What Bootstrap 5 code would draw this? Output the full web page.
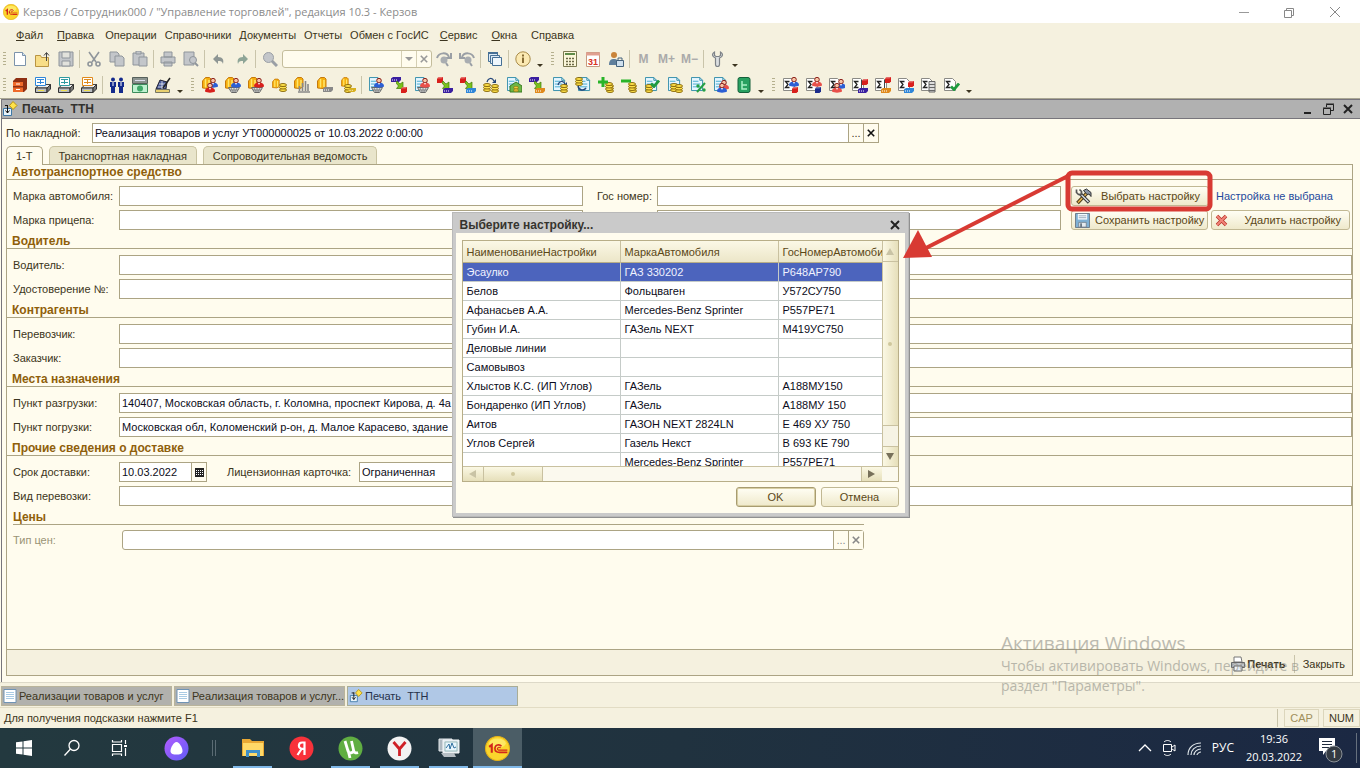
<!DOCTYPE html>
<html lang="ru">
<head>
<meta charset="utf-8">
<meta name="viewport" content="width=device-width, initial-scale=1">
<title>Печать ТТН</title>
<link href="https://cdn.jsdelivr.net/npm/bootstrap@5.3.0/dist/css/bootstrap.min.css" rel="stylesheet">
<style>
  :root { --line:#aca484; --bar:#f5f1df; --paper:#fffcee; --ink:#3c3520; --gold:#8f5f0b; }
  body { font:11px/14px "Liberation Sans", Arial, sans-serif; color:var(--ink); background:var(--bar); overflow:hidden; }
  button { font:inherit; color:inherit; background:none; border:0; padding:0; }
  input { font:inherit; color:#0c0c20; border:0; background:transparent; padding:0 2px; min-width:0; outline:0; }
  a { text-decoration:none; }
  svg { display:block; flex:none; }
  .seg { font-family:"Open Sans", "Noto Sans", sans-serif; }

  .app-title { height:23px; background:#fff; color:#8b8b8b; padding-left:3px; }
  .app-title .ctl { width:46px; height:23px; }
  .app-title .ctls { margin-right:1px; }
  .menu-row { height:23px; padding:0 9px; }
  .menu-row a { color:var(--ink); padding:0 4px; white-space:nowrap; }
  .menu-row a.hot { padding:0 7px; }
  .tool-row { height:26px; }
  .tool { width:23px; height:22px; display:flex; align-items:center; justify-content:center; flex:none; font-weight:bold; font-size:12px; color:#aaa; }
  .grip { width:12px; height:15px; background:repeating-linear-gradient(#b5b08e 0 1px, transparent 1px 3px) 5px 0/3px 100% no-repeat; flex:none; }
  .grip.lead-in { width:8px; background-position:3px 0; }
  .vsep { width:5px; height:18px; background:linear-gradient(#c9c4aa,#c9c4aa) 2px 0/1px 100% no-repeat; flex:none; }
  .more { width:12px; height:16px; display:flex; align-items:flex-end; justify-content:center; flex:none; }
  .finder { width:150px; height:18px; border:1px solid #c4bd9c; border-radius:3px; background:var(--paper); margin-left:1px; }
  .finder input { width:118px; }
  .finder button { width:15px; border-left:1px solid #d5cfb4; display:flex; align-items:center; justify-content:center; flex:none; }

  .mdi { border-top:1px solid #a9a693; background:var(--paper); border-bottom:1px solid #ddd9c8; }
  .mdi-frame { border-left:1px solid #77757c; border-top:1px solid #77757c; margin-left:1px; }
  .mdi-title { height:19px; background:#b1b1b1; border-bottom:1px solid #77757c; font-weight:bold; font-size:12px; color:#33322e; padding-right:2px; }
  .mdi-title .ctl { width:20px; height:18px; display:flex; align-items:center; justify-content:center; }
  .content { padding:4px 7px 6px 4px; }
  .box { border:1px solid var(--line); background:#fff; height:20px; display:flex; min-width:0; }
  .box input { flex:1 1 0; height:18px; }
  .box button { width:15px; border-left:1px solid var(--line); display:flex; align-items:center; justify-content:center; flex:none; background:var(--paper); }
  .basis-label { width:86px; }
  .basis { width:787px; }
  .tabs { gap:6px; margin-top:3px; }
  .tabs button { height:18px; padding:0 9px; border:1px solid #c8c2a0; border-bottom:0; border-radius:5px 5px 0 0; background:#e9e5cb; }
  .tabs button.on { background:var(--paper); height:19px; margin-bottom:-1px; position:relative; border-color:var(--line); }
  .panel { border:1px solid var(--line); }
  .sect { height:19px; padding:0 5px; border-bottom:1px solid var(--line); font-size:12px; font-weight:bold; line-height:14px; color:var(--gold); margin:0 0 6px; display:flex; align-items:flex-end; }
  .sect.first { height:15px; }
  .form-line { display:grid; grid-template-columns:106px 1fr; align-items:center; padding-left:6px; margin-bottom:4px; }
  .group > .form-line:last-child { margin-bottom:0; }
  .cars { grid-template-columns:106px 464fr 74px 404fr 291px; }
  .cars > label + .box + label { padding-left:14px; }
  .set-buttons { padding:0 2px 0 10px; gap:3px; }
  .set-buttons a { color:#1f4a9c; padding-left:4px; white-space:nowrap; }
  .push { height:20px; border:1px solid #c1b893; border-radius:3px; background:linear-gradient(#fffef4,#efe9cb); color:#5b4716; }
  .push svg { margin:0 5px 0 3px; }
  .pick { width:138px; }
  .save { width:137px; }
  .delivery { grid-template-columns:106px 88px 152px 240px; }
  .delivery > label + .box + label { padding-left:20px; }
  .prices { width:851px; margin-left:6px; }
  .prices .sect { padding-left:0; margin-bottom:5px; }
  .prices .form-line { grid-template-columns:109px 1fr; padding:0; color:#9a9375; }
  .prices .box { border-radius:3px; }
  .prices .box button { color:#888; }
  .foot { height:26px; border-top:1px solid var(--line); background:var(--bar); padding:2px 7px 0 0; gap:6px; }

  .win-tabs { height:24px; padding:1px 1px 0; gap:2px; }
  .win-tabs button { width:171px; height:20px; border:1px solid #b9b49b; background:#b1b1ad; padding:0 1px; gap:2px; white-space:nowrap; }
  .win-tabs button.on { background:#b0c8e6; border-color:#a9ad96; color:#26314a; }
  .status { height:21px; border-top:1px solid #e2dcc4; padding-left:4px; }
  .status .cell { height:18px; border:1px solid #dcd6bc; padding:0 5px; display:flex; align-items:center; }
  .status .off { color:#a08f5a; }

  .taskbar { height:40px; background:linear-gradient(90deg,#23393f,#20323f 50%,#1b2843); color:#fff; }
  .taskbar .slot { width:49px; height:40px; display:flex; align-items:center; justify-content:center; border-bottom:2px solid transparent; flex:none; padding-top:2px; }
  .taskbar .sys { width:48px; }
  .taskbar .run { background:linear-gradient(#80b8e8,#80b8e8) center bottom/39px 2px no-repeat border-box; }
  .taskbar .now { background:#4b5d66; border-color:#80b8e8; }
  .lang { font-size:12px; }
  .clock { line-height:18px; width:64px; }

  .dialog-layer { position:absolute; left:0; right:0; top:213px; pointer-events:none; }
  .dlg { width:455px; border:3px solid #cacaca; border-width:0 3px 3px; background:var(--paper); box-shadow:0 0 0 1px #b9b9b9, 1px 1px 0 1px #909090; pointer-events:auto; }
  .dlg-title { height:20px; background:#cacaca; font-size:12px; font-weight:bold; color:#36342f; padding:3px 5px 0 4px; }
  .dlg-body { padding:7px 6px 6px; }
  .lister { border:1px solid #b8ae88; display:grid; grid-template-columns:minmax(0,1fr) 16px; }
  .clip { height:225px; overflow:hidden; background:#fff; }
  .lister table { table-layout:fixed; width:480px; color:#0c0c20; border-collapse:separate; border-spacing:0; }
  .lister .c1, .lister .c2 { width:158px; }
  .lister th { font-weight:normal; height:22px; background:linear-gradient(#fbf8e6,#ece6c8); color:#5b4716; border-right:1px solid #c9c1a0; border-bottom:1px solid #b8ae88; padding:0 4px; }
  .lister td { height:19px; padding:0 4px; border-right:1px solid #c5cbc8; border-bottom:1px solid #c5cbc8; white-space:nowrap; }
  .lister tr.sel td { background:#4c64bd; color:#f0f2ff; }
  .vbar { border-left:1px solid #c9c1a0; background:#f6f3e4; }
  .knob { background:linear-gradient(90deg,#fbf8e4,#e6dfba); border-bottom:1px solid #c9c1a0; display:flex; align-items:center; justify-content:center; color:#77705a; }
  .knob.off { color:#c9c3a5; }
  .vbar .up { height:21px; } .vbar .track { height:164px; } .vbar .down { height:20px; border:0; border-top:1px solid #c9c1a0; }
  .hbar { height:15px; border-top:1px solid #c9c1a0; background:#fbf9ee; }
  .hbar .knob { border:0; border-right:1px solid #c9c1a0; background:linear-gradient(#fbf8e4,#e6dfba); width:21px; }
  .hbar .track { width:59px; }
  .hbar .next { border-left:1px solid #c9c1a0; border-right:0; }
  .answers { gap:5px; padding-top:5px; }
  .dlg .push { width:78px; height:20px; }
  .dlg .push.main { width:80px; border-color:#a89c70; box-shadow:inset 0 0 0 1px #d8cfa4; }

  .pointer { position:absolute; right:146px; top:168px; pointer-events:none; z-index:3; }
  .wmark { position:absolute; right:0; bottom:72px; width:359px; color:#8f8f87; opacity:.6; font-size:14px; line-height:20px; pointer-events:none; padding-right:52px; }
  .wmark b { font-weight:normal; font-size:19px; line-height:26px; display:block; }
</style>
</head>
<body>
<svg width="0" height="0" class="position-absolute" aria-hidden="true">
  <defs>
    <symbol id="paper" viewBox="0 0 14 16"><path d="M.5.5h9l3 3v11H.5z" fill="#e6f6ff" stroke="#2f8aa8"/><path d="M9.500.5v3h3" fill="none" stroke="#2f8aa8"/><path d="M2 4.500h6M2 7.500h8M2 10.500h8" stroke="#3fa8cc"/></symbol>
    <symbol id="sig" viewBox="0 0 16 16"><path d="M.5 1.500h8l3 3v9H.5z" fill="#fff" stroke="#8b8b86"/><path d="M6.500 4.500H2.500l2.500 3-2.500 3h4" fill="none" stroke="#222" stroke-width="1.300"/></symbol>
    <symbol id="man" viewBox="0 0 10 10"><path d="M0 8.500C0 5.500 2 4.500 5 4.500s5 1 5 4c-2 1.500-8 1.500-10 0z" fill="currentColor"/><circle cx="5" cy="2.600" r="2.300" fill="#f8c4a4" stroke="#8a1f1a"/><path d="M4 5l1 2 1-2z" fill="#fff"/></symbol>
    <symbol id="net" viewBox="0 0 12 6"><path d="M.5.5h11l-3 5h-5z" fill="#dfe3e3" stroke="#666"/><path d="M3 1l2 4M6 1v4M9 1 7 5M2 3h8" stroke="#777" stroke-width=".8"/></symbol>
    <symbol id="gold" viewBox="0 0 10 12"><path d="M.5 11V4l3-3.500h4l1.500 1.500v8l-3 1.500z" fill="#f6b010" stroke="#c67a0c"/><path d="M3.500 2v8.500M7 3v7" stroke="#ffe66c" stroke-width="1.500"/></symbol>
    <symbol id="coins" viewBox="0 0 8 9"><g fill="#ffe14a" stroke="#806004" stroke-width=".9"><ellipse cx="4" cy="7" rx="3.500" ry="1.500"/><ellipse cx="4" cy="4.500" rx="3.500" ry="1.500"/><ellipse cx="4" cy="2" rx="3.500" ry="1.500"/></g></symbol>
    <symbol id="cube" viewBox="0 0 6 6"><path d="M0 1.500 1.500 0H6v4.500L4.500 6H0z" fill="currentColor"/><path d="M0 1.500 1.500 0H6L4.500 1.500z" fill="#fff" opacity=".35"/></symbol>
    <symbol id="flat" viewBox="0 0 10 5"><path d="M0 1.500 2 0h8v3L8 5H0z" fill="currentColor"/><path d="M1 3h6" stroke="#fff" stroke-dasharray="1 1"/></symbol>
    <symbol id="garr" viewBox="0 0 8 8"><path d="M1 0l3 3 3-2v6.500H.5l2-2.500L0 2z" fill="#7bc21c" stroke="#3f7a0b" stroke-width=".7"/></symbol>
    <symbol id="tick" viewBox="0 0 10 8"><path d="M1 3.500l3 3 5-6" fill="none" stroke="#1f9a40" stroke-width="2.800"/></symbol>
    <symbol id="bend" viewBox="0 0 10 6"><path d="M1 5c1-4 5-5 7-1" fill="none" stroke="#24457a" stroke-width="1.200"/><path d="M10 2v4H6z" fill="#24457a"/></symbol>
    <symbol id="prn" viewBox="0 0 16 9"><path d="M.5 4l4-3.500h11L12 4z" fill="#ececec" stroke="#444"/><path d="M.5 4H12v4.500H.5z" fill="#b9bcc0" stroke="#333"/><path d="M12 4l3.500-3.500V5L12 8.500z" fill="#777" stroke="#333"/><path d="M3 6.500h6" stroke="#efe14c"/></symbol>
    <symbol id="form" viewBox="0 0 11 9"><path d="M.5.500h10v8H.5z" fill="#fff" stroke="currentColor"/><path d="M2 2.500h7M2 5.500h7M5.500 2v5" stroke="currentColor"/></symbol>
    <symbol id="c1" viewBox="0 0 24 24"><circle cx="12" cy="12" r="11.500" fill="#fbd52c" stroke="#e5b118"/><ellipse cx="12" cy="7" rx="8" ry="4.500" fill="#fff07a" opacity=".7"/><path d="M4 10.500l2.500-2v7.500" fill="none" stroke="#d2261b" stroke-width="2"/><path d="M15.800 9.800C14 7.500 9.500 8.500 9.500 12s3 3.700 4.500 3.700h7.500" fill="none" stroke="#d2261b" stroke-width="1.500"/><path d="M15 11.500c-1-1.200-3-.8-3 .7s1.300 1.300 2.500 1.300h7" fill="none" stroke="#d2261b" stroke-width="1.100"/></symbol>
    <symbol id="ttn" viewBox="0 0 16 16"><path d="M1.500 7.500h8v7h-8z" fill="#e8f3fb" stroke="#3f79a8"/><path d="M5.500 4v8M3.500 9.500l2 2.500 2-2.500M3 4.500h3" fill="none" stroke="#111"/><path d="M11 .5 15 4.500l-4 4-3.500-4z" fill="#ffe24a" stroke="#b8950f"/></symbol>
    <symbol id="sheet" viewBox="0 0 14 14"><path d="M1 .5h12v13H1z" fill="#fff" stroke="#6f93b5"/><path d="M3 3.500h8M3 5.500h8M3 7.500h8M3 9.500h8" stroke="#a9cbe4"/></symbol>
    <symbol id="xx" viewBox="0 0 10 10"><path d="M1 1l8 8M9 1 1 9" fill="none" stroke="currentColor" stroke-width="2"/></symbol>
    <symbol id="dn" viewBox="0 0 8 4"><path d="M0 0h8L4 4z" fill="currentColor"/></symbol>
    <symbol id="disk" viewBox="0 0 16 16"><path d="M.5.500h15v15H.5z" fill="currentColor" stroke="#6b7884"/><path d="M3 1h10v6H3z" fill="#f5fbff"/><path d="M4 3h8M4 5h8" stroke="#9ab"/><path d="M4 10h8v5H4z" fill="#e4ebf0" stroke="#6b7884" stroke-width=".8"/><path d="M5.500 11h2v4h-2z" fill="#6b7884"/></symbol>
  </defs>
</svg>

<div class="d-flex flex-column vh-100 position-relative">
  <header class="app-title seg d-flex align-items-center">
    <svg width="16" height="16" class="me-1"><use href="#c1"/></svg>
    <span>Керзов / Сотрудник000 / "Управление торговлей", редакция 10.3 - Керзов</span>
    <div class="ctls ms-auto d-flex">
      <button class="ctl" aria-label="Свернуть"><svg width="46" height="20"><path d="M18 10.500h10" stroke="#999"/></svg></button>
      <button class="ctl" aria-label="Развернуть"><svg width="46" height="20" fill="none" stroke="#888"><path d="M17.500 8.500h7v7h-7zM19.500 8V6.500h7v7H25"/></svg></button>
      <button class="ctl" aria-label="Закрыть"><svg width="46" height="20" stroke="#888"><path d="M17 5l10 10M27 5 17 15"/></svg></button>
    </div>
  </header>

  <nav class="menu-row d-flex align-items-center">
    <a class="hot" href="#"><u>Ф</u>айл</a><a class="hot" href="#"><u>П</u>равка</a><a href="#">Операции</a><a href="#">Справочники</a><a href="#">Документы</a><a href="#">Отчеты</a><a href="#">Обмен с ГосИС</a><a class="hot" href="#"><u>С</u>ервис</a><a class="hot" href="#"><u>О</u>кна</a><a class="hot" href="#">Сп<u>р</u>авка</a>
  </nav>
  <div class="tool-row d-flex align-items-center" id="bar1"></div>
  <div class="tool-row d-flex align-items-center" id="bar2"></div>

  <main class="mdi d-flex flex-column flex-grow-1">
    <div class="mdi-frame d-flex flex-column flex-grow-1">
    <div class="mdi-title d-flex align-items-center">
      <svg width="16" height="16" class="me-1"><use href="#ttn"/></svg><span>Печать&nbsp; ТТН</span>
      <div class="ms-auto d-flex">
        <button class="ctl" aria-label="Свернуть окно"><svg width="12" height="12"><path d="M2 10h7" stroke="#222" stroke-width="2"/></svg></button>
        <button class="ctl" aria-label="Восстановить окно"><svg width="12" height="12" fill="none" stroke="#222"><path d="M1.500 5.500h7v6h-7zM1 5h8M4.500 4V1.500h7v6H9M4 1h8"/></svg></button>
        <button class="ctl" aria-label="Закрыть окно"><svg width="10" height="10" color="#222"><use href="#xx"/></svg></button>
      </div>
    </div>
    <div class="content d-flex flex-column flex-grow-1">
      <div class="d-flex align-items-center">
        <label for="basis" class="basis-label">По накладной:</label>
        <div class="box basis"><input id="basis" value="Реализация товаров и услуг УТ000000025 от 10.03.2022 0:00:00"><button aria-label="Выбрать">...</button><button aria-label="Очистить"><svg width="8" height="8" color="#111"><use href="#xx"/></svg></button></div>
      </div>
      <div class="tabs d-flex align-items-end"><button class="on">1-Т</button><button>Транспортная накладная</button><button>Сопроводительная ведомость</button></div>
      <div class="panel d-flex flex-column flex-grow-1">
        <section class="group">
          <h2 class="sect first">Автотранспортное средство</h2>
          <div class="form-line cars">
            <label for="car">Марка автомобиля:</label><div class="box"><input id="car"></div>
            <label for="num">Гос номер:</label><div class="box"><input id="num"></div>
            <div class="set-buttons d-flex align-items-center">
              <button class="push pick d-flex align-items-center"><svg width="17" height="17" viewBox="0 0 17 17"><path d="M2.500 15 12 5" stroke="#4a3a1a" stroke-width="3.600"/><path d="M3 14.500 12 5" stroke="#e8b54a" stroke-width="1.600"/><path d="M5 5.500l9 9" stroke="#333" stroke-width="3.400"/><path d="M5 5.500l8.500 8.500" stroke="#d8dde2" stroke-width="1.400"/><path d="M1.500 1.500v3l2 2h3v-3l-2-2" fill="none" stroke="#555" stroke-width="1.700"/><path d="M8.500 2.500l3-1.500 4.500 3.500v4l-2-2.500-2 .5z" fill="#8a94a4" stroke="#333"/></svg><span class="ms-auto pe-2">Выбрать настройку</span></button>
              <a href="#">Настройка не выбрана</a>
            </div>
          </div>
          <div class="form-line cars">
            <label for="trailer">Марка прицепа:</label><div class="box"><input id="trailer"></div>
            <span></span><div class="box"><input aria-label="Гос номер прицепа"></div>
            <div class="set-buttons d-flex align-items-center">
              <button class="push save d-flex align-items-center"><svg width="15" height="15" color="#7fb0d4"><use href="#disk"/></svg><span class="text-nowrap">Сохранить настройку</span></button>
              <button class="push d-flex align-items-center flex-grow-1"><svg width="13" height="13" viewBox="0 0 13 13"><path d="M2 2l9 9M11 2l-9 9" stroke="#b8322a" stroke-width="3.500"/><path d="M2 2l9 9M11 2l-9 9" stroke="#f08478" stroke-width="2"/></svg><span class="ms-auto pe-2">Удалить настройку</span></button>
            </div>
          </div>
        </section>
        <section class="group">
          <h2 class="sect">Водитель</h2>
          <div class="form-line"><label for="drv">Водитель:</label><div class="box"><input id="drv"></div></div>
          <div class="form-line"><label for="lic">Удостоверение №:</label><div class="box"><input id="lic"></div></div>
        </section>
        <section class="group">
          <h2 class="sect">Контрагенты</h2>
          <div class="form-line"><label for="carr">Перевозчик:</label><div class="box"><input id="carr"></div></div>
          <div class="form-line"><label for="cust">Заказчик:</label><div class="box"><input id="cust"></div></div>
        </section>
        <section class="group">
          <h2 class="sect">Места назначения</h2>
          <div class="form-line"><label for="to">Пункт разгрузки:</label><div class="box"><input id="to" value="140407, Московская область, г. Коломна, проспект Кирова, д. 4а"></div></div>
          <div class="form-line"><label for="from">Пункт погрузки:</label><div class="box"><input id="from" value="Московская обл, Коломенский р-он, д. Малое Карасево, здание"></div></div>
        </section>
        <section class="group">
          <h2 class="sect">Прочие сведения о доставке</h2>
          <div class="form-line delivery">
            <label for="date">Срок доставки:</label><div class="box"><input id="date" value="10.03.2022"><button aria-label="Календарь"><svg width="9" height="9" viewBox="0 0 9 9" shape-rendering="crispEdges"><path d="M0 0h9v9H0z" fill="#222"/><path d="M1 2h1v1H1zM3 2h1v1H3zM5 2h1v1H5zM7 2h1v1H7zM1 4h1v1H1zM3 4h1v1H3zM5 4h1v1H5zM7 4h1v1H7zM1 6h1v1H1zM3 6h1v1H3zM5 6h1v1H5zM7 6h1v1H7z" fill="#fff"/></svg></button></div>
            <label for="card">Лицензионная карточка:</label><div class="box"><input id="card" value="Ограниченная"></div>
          </div>
          <div class="form-line"><label for="kind">Вид перевозки:</label><div class="box"><input id="kind"></div></div>
        </section>
        <section class="prices">
          <h2 class="sect">Цены</h2>
          <div class="form-line"><label for="price">Тип цен:</label><div class="box"><input id="price"><button aria-label="Выбрать тип">...</button><button aria-label="Очистить тип"><svg width="8" height="8"><use href="#xx"/></svg></button></div></div>
        </section>
        <div class="foot d-flex align-items-center justify-content-end mt-auto">
          <button class="d-flex align-items-center fw-bold"><svg width="17" height="16" viewBox="0 0 17 16"><path d="M4 1h7l1 5H4z" fill="#fff" stroke="#777"/><path d="M1.500 6.500h13v5h-13z" fill="#c3c6ca" stroke="#666"/><path d="M4 10h8v5H4z" fill="#eef6ff" stroke="#666"/></svg>Печать</button>
          <span class="vsep"></span><button>Закрыть</button>
        </div>
      </div>
    </div>
    </div>
  </main>

  <div class="win-tabs d-flex align-items-center">
    <button class="d-flex align-items-center"><svg width="14" height="14"><use href="#sheet"/></svg><span>Реализации товаров и услуг</span></button>
    <button class="d-flex align-items-center"><svg width="14" height="14"><use href="#sheet"/></svg><span>Реализация товаров и услуг...</span></button>
    <button class="on d-flex align-items-center"><svg width="14" height="14"><use href="#ttn"/></svg><span>Печать&nbsp; ТТН</span></button>
  </div>
  <div class="status d-flex align-items-center">
    <span class="flex-grow-1">Для получения подсказки нажмите F1</span>
    <span class="vsep"></span>
    <span class="cell off ms-1">CAP</span><span class="cell ms-1">NUM</span>
  </div>

  <footer class="taskbar seg d-flex align-items-center">
    <button class="slot sys" aria-label="Пуск"><svg width="16" height="16" fill="#fff"><path d="M0 2.300 6.500 1.400v6.100H0zM7.500 1.200 16 0v7.500H7.500zM0 8.500h6.500v6.100L0 13.700zM7.500 8.500H16V16l-8.500-1.200z"/></svg></button>
    <button class="slot sys" aria-label="Поиск"><svg width="18" height="18" fill="none" stroke="#fff" stroke-width="1.300"><circle cx="11" cy="6.500" r="5"/><path d="M7.500 10 1.500 16.500"/></svg></button>
    <button class="slot sys" aria-label="Задачи"><svg width="18" height="16" fill="none" stroke="#fff" stroke-width="1.200"><path d="M1.500 4.500h9v7h-9zM1.500 0v2h9V0M1.500 16v-2h9v2M14.500 0v4M14.500 8v8"/><path d="M13 5h3v2h-3z" fill="#fff" stroke="none"/></svg></button>
    <button class="slot ms-2 sys" aria-label="Алиса"><svg width="25" height="25"><defs><linearGradient id="al" x2="1" y2="1"><stop stop-color="#b45cff"/><stop offset="1" stop-color="#5f5cf5"/></linearGradient></defs><circle cx="12.500" cy="12.500" r="12" fill="url(#al)"/><path d="M12.500 6c3 0 6 6 6 9s-3 3.500-6 3.500-6-.5-6-3.500 3-9 6-9z" fill="#fff"/></svg></button>
    <svg width="28" height="20"><path d="M12.500 2v16M15.500 2v16" stroke="#5a6b73"/></svg>
    <button class="slot run" aria-label="Проводник"><svg width="22" height="20"><path d="M0 1h8l2 2h12v15H0z" fill="#e9a834"/><path d="M1 5h20v13H1z" fill="#ffd968"/><path d="M4 19v-7h14v7h-3v-4H7v4z" fill="#3f8fc9"/></svg></button>
    <button class="slot" aria-label="Яндекс"><svg width="25" height="25"><circle cx="12.500" cy="12.500" r="12" fill="#f8323a"/><path d="M15.500 19V6.500h-2.300c-4.400 0-4.400 6.300 0 6.300h2.300M12.500 13l-4 6" fill="none" stroke="#fff" stroke-width="2.200"/></svg></button>
    <button class="slot run" aria-label="Торрент"><svg width="25" height="25"><circle cx="12.500" cy="12.500" r="12" fill="#60ae42"/><path d="M7 5l3 10c1 3 6 2 5.500-1L13.500 5M15.500 14c1 4 3 3 4.500 2.500M10 14l2 8" fill="none" stroke="#fff" stroke-width="2.800"/></svg></button>
    <button class="slot run" aria-label="Браузер"><svg width="25" height="25"><circle cx="12.500" cy="12.500" r="12" fill="#f3f3f3"/><path d="M6.500 6 12.500 13l6-7M12.500 13v7" fill="none" stroke="#cf2027" stroke-width="2.800"/></svg></button>
    <button class="slot run" aria-label="Монитор"><svg width="24" height="24"><path d="M2 3h13v12H2z" fill="#aeb8c0" stroke="#e7ebee"/><path d="M6 4h16v13H6z" fill="#dfe7ec" stroke="#f8fafb"/><path d="M8 6h12v9H8z" fill="#e8f5fc" stroke="#9bb"/><path d="M9 12l3-4 1 5 2-6 2 5 2-1" fill="none" stroke="#2f6f9f"/><path d="M4 17h13l2 4H7z" fill="#b6bec4"/></svg></button>
    <button class="slot now" aria-label="1С"><svg width="25" height="25"><use href="#c1"/></svg></button>
    <div class="ms-auto d-flex align-items-center">
      <svg width="24" height="20" fill="none" stroke="#fff" stroke-width="1.300"><path d="M4 13l6-6 6 6"/></svg>
      <svg width="24" height="20" fill="none" stroke="#fff"><path d="M4.500 6.500h8v7h-8zM13 9l3-2v6l-3-2M5 4c2-2 5-2 7 0M5 16c2 2 5 2 7 0"/></svg>
      <svg width="25" height="20" fill="none" stroke="#dfe6ea" stroke-width="1.200"><path d="M5 17C5 10 10 5 18 5M8 17c0-5 4-9 10-9M11 17c0-3 3-6 7-6M14 17c0-1 2-3 4-3"/></svg>
      <span class="lang px-1">РУС</span>
      <div class="clock text-center ms-1">19:36<br>20.03.2022</div>
      <svg width="54" height="30" viewBox="0 0 54 30"><path d="M13 5h16v13H20l-3 4v-4h-4z" fill="#fff"/><path d="M16 8.500h10M16 11.500h10M16 14.500h7" stroke="#1f2b3d"/><circle cx="28" cy="21" r="8" fill="#333a42" stroke="#8b9197"/><text x="25" y="25" fill="#fff" font-size="11">1</text><path d="M50.500 0v30" stroke="#66707d"/></svg>
    </div>
  </footer>

  <div class="dialog-layer d-flex justify-content-center">
    <div class="dlg" role="dialog" aria-labelledby="dt">
      <div class="dlg-title d-flex align-items-center justify-content-between"><span id="dt">Выберите настройку...</span><button aria-label="Закрыть диалог"><svg width="10" height="10" color="#222"><use href="#xx"/></svg></button></div>
      <div class="dlg-body">
        <div class="lister">
          <div class="clip">
            <table>
              <colgroup><col class="c1"><col class="c2"><col></colgroup>
              <thead><tr><th>НаименованиеНастройки</th><th>МаркаАвтомобиля</th><th>ГосНомерАвтомобиля</th></tr></thead>
              <tbody>
                <tr class="sel"><td>Эсаулко</td><td>ГАЗ 330202</td><td>Р648АР790</td></tr>
                <tr><td>Белов</td><td>Фольцваген</td><td>У572СУ750</td></tr>
                <tr><td>Афанасьев А.А.</td><td>Mercedes-Benz Sprinter</td><td>Р557РЕ71</td></tr>
                <tr><td>Губин И.А.</td><td>ГАЗель NEXT</td><td>М419УС750</td></tr>
                <tr><td>Деловые линии</td><td></td><td></td></tr>
                <tr><td>Самовывоз</td><td></td><td></td></tr>
                <tr><td>Хлыстов К.С. (ИП Углов)</td><td>ГАЗель</td><td>А188МУ150</td></tr>
                <tr><td>Бондаренко (ИП Углов)</td><td>ГАЗель</td><td>А188МУ 150</td></tr>
                <tr><td>Аитов</td><td>ГАЗОН NEXT 2824LN</td><td>Е 469 ХУ 750</td></tr>
                <tr><td>Углов Сергей</td><td>Газель Некст</td><td>В 693 КЕ 790</td></tr>
                <tr><td></td><td>Mercedes-Benz Sprinter</td><td>Р557РЕ71</td></tr>
              </tbody>
            </table>
          </div>
          <div class="vbar d-flex flex-column">
            <span class="knob off up"><svg width="8" height="7"><path d="M0 7h8L4 0z" fill="currentColor"/></svg></span>
            <span class="knob track"><svg width="4" height="4"><circle cx="2" cy="2" r="2" fill="#cfc79c"/></svg></span>
            <span class="flex-grow-1"></span>
            <span class="knob down"><svg width="8" height="7"><path d="M0 0h8L4 7z" fill="currentColor"/></svg></span>
          </div>
          <div class="hbar d-flex">
            <span class="knob off"><svg width="7" height="8"><path d="M7 0v8L0 4z" fill="currentColor"/></svg></span>
            <span class="knob track"><svg width="4" height="4"><circle cx="2" cy="2" r="2" fill="#cfc79c"/></svg></span>
            <span class="flex-grow-1"></span>
            <span class="knob next"><svg width="7" height="8"><path d="M0 0v8l7-4z" fill="currentColor"/></svg></span>
          </div>
          <div class="hbar"></div>
        </div>
        <div class="answers d-flex justify-content-end"><button class="push main">OK</button><button class="push">Отмена</button></div>
      </div>
    </div>
  </div>

  <svg class="pointer" width="314" height="96" fill="none" stroke="#d83a33"><rect x="168" y="5" width="142" height="36" rx="4" stroke-width="5"/><path d="M168 8 26 80" stroke-width="4"/><path d="M3 90 18 62l14 27z" fill="#d83a33" stroke="none"/></svg>
  <div class="wmark seg"><b>Активация Windows</b>Чтобы активировать Windows, перейдите в раздел "Параметры".</div>
</div>

<script>
// Toolbar glyphs: a layer is [symbol, x, y, width, height, colour]; a plain string is raw SVG.
const R='#d8201c', B='#2c5fd4', P='#3a1fa0', L='#2f86d8', O='#e08a1c', N='#1c2c8c', K='#e8504a';
const paper=['paper',1,0,13,15], sig=['sig',0,0,16,16], gold=['gold',0,0,10,12];
const man=(c,x=6,y=1)=>['man',x,y,10,10,c], net=['net',3,10,12,6], coins=(x,y)=>['coins',x,y,8,9];
const cube=(x,y,c=R)=>['cube',x,y,6,6,c], flat=(x,y,c)=>['flat',x,y,10,5,c], arr=['garr',5,4,8,8];
const prn=['prn',0,7,16,9];
const gray='fill="#c3c6ca" stroke="#8f959b"';
const bar1=['G',
 ['<path d="M2.500 1.500h8l3 3v10h-11z" fill="#fff" stroke="#7c93ac"/><path d="M10.500 1.500v3h3" fill="#d6e6f4" stroke="#7c93ac"/>','Новый'],
 ['<path d="M.5 4.500h5l1 2h7v9H.5z" fill="#f8dd86" stroke="#b99442"/><path d="M11.500 10V2M9 4.500 11.500 1.500 14 4.500" fill="none" stroke="#444"/>','Открыть'],
 [`<path d="M1 1h14v14H1z" ${gray}/><path d="M4 1h8v6H4zM4 10h8v5H4z" fill="#e2e2dc" stroke="#8f959b"/>`,'Сохранить'],'S',
 ['<g fill="none" stroke="#8f959b" stroke-width="1.600"><path d="M3 1l7 10M13 1 6 11"/><circle cx="4" cy="13" r="2"/><circle cx="12" cy="13" r="2"/></g>','Вырезать'],
 [`<path d="M1 1h7l2 2v8H1z" ${gray}/><path d="M6 5h7l2 2v8H6z" ${gray}/>`,'Копировать'],
 [`<path d="M1 2h11v12H1z" ${gray}/><path d="M4 0h5v3H4zM7 6h8v9H7z" ${gray}/>`,'Вставить'],'S',
 [`<path d="M4 1h8v5H4zM1 6h14v6H1zM4 11h8v4H4z" ${gray}/>`,'Печать'],
 [`<path d="M1 1h10v13H1z" ${gray}/><circle cx="10" cy="9" r="3.500" ${gray}/><path d="M12 12l3 3" stroke="#8f959b" stroke-width="2"/>`,'Просмотр'],'S',
 ['<path d="M2 8l5-5v3c5 0 6 3 5 7-1-3-2-3-5-3v3z" fill="#8e9694"/>','Отменить'],
 ['<path d="M14 8 9 3v3c-5 0-6 3-5 7 1-3 2-3 5-3v3z" fill="#8ea597"/>','Вернуть'],'S',
 ['<circle cx="6.500" cy="6.500" r="5" fill="#c3c6ca" stroke="#9a9fa5"/><path d="M10 10l5 5" stroke="#9a9fa5" stroke-width="3"/>','Найти'],'F',
 ['<path d="M1 7c2-6 10-6 12-1M15 2v5h-5" fill="none" stroke="#9a9fa5" stroke-width="2"/><circle cx="8" cy="9" r="3.500" fill="#a9adb1"/><path d="M10 12l2 3" stroke="#9a9fa5" stroke-width="2"/>','Найти далее'],
 ['<path d="M15 7C13 1 5 1 3 6M1 2v5h5" fill="none" stroke="#9a9fa5" stroke-width="2"/><circle cx="9" cy="9" r="3.500" fill="#a9adb1"/><path d="M11 12l2 3" stroke="#9a9fa5" stroke-width="2"/>','Найти назад'],'S',
 ['<path d="M1.500 1.500h9v9h-9z" fill="#dbe9f5" stroke="#456f95"/><path d="M3.500 4.500h9v8h-9z" fill="#dbe9f5" stroke="#456f95"/><path d="M5.500 6.500h9v8h-9z" fill="#eef6fc" stroke="#456f95"/><path d="M1 2h10" stroke="#456f95" stroke-width="2"/>','Окна'],'S',
 ['<circle cx="8" cy="8" r="7.200" fill="#fbe9b2" stroke="#a88b4a"/><path d="M8 6.500V12M8 3.500v2" stroke="#7a5f28" stroke-width="1.800"/>','Справка'],'M','G',
 ['<path d="M1.500.5h13v15h-13z" fill="#fbf7da" stroke="#7c7a52"/><path d="M3 3h10" stroke="#5f8c4a" stroke-width="2"/><path d="M4 7.500h9M4 10.500h9M4 13.500h9" stroke="#6b6848" stroke-width="1.500" stroke-dasharray="2 1"/>','Калькулятор'],
 ['<path d="M1.500 1.500h13v14h-13z" fill="#fff" stroke="#c79a80"/><path d="M1 3h14" stroke="#e0a090" stroke-width="3"/><text x="3" y="14" font-size="9" font-weight="bold" fill="#d83020">31</text>','Календарь'],
 ['<circle cx="6" cy="4" r="3" fill="#c9843a"/><path d="M1 14c0-5 2-6 5-6s4 1 4 6z" fill="#5f7f9c"/><path d="M8.500 9.500h7v6h-7z" fill="#cfe0ee" stroke="#44627c"/><path d="M10 9V7h4v2" fill="none" stroke="#44627c"/>','Пользователи'],'S',
 ['T','M'],['T','M+'],['T','M−'],'S',
 ['<path d="M4.500 1C1.500 2.500 2 6 5.500 7v6.500a2 2 0 0 0 4 0V7C13 6 13.500 2.500 10.500 1v3.500l-1.500 1H6l-1.500-1z" fill="#dcdfe1" stroke="#7d8287" stroke-width="1.200"/>','Настройка'],'M'];
const bar2=['G',
 ['<path d="M1 4l3-3h11v11l-3 3H1z" fill="#8e2f12"/><path d="M1 5h10v4H1zM1 10.500h10V15H1z" fill="#ef6a2a"/><path d="M4 7h4M4 12.500h4" stroke="#fff"/>'],
 [prn,['form',0,0,11,9,L]],[prn,['form',1,0,11,9,'#2f9aa0']],[prn,['form',1,0,11,9,O]],'S',
 ['<g fill="#142a8c"><circle cx="4" cy="2.500" r="2"/><circle cx="12" cy="2.500" r="2"/><path d="M1 5h6v5H6v6H2v-6H1zM9 5h6v5h-1v6h-4v-6H9z"/></g><path d="M4 5v4M12 5v4" stroke="#fff"/>'],
 ['<path d="M.5.5h15v6H.5z" fill="#8c9490" stroke="#56605a"/><path d="M.5 7.500h15v8H.5z" fill="#bff0d0" stroke="#3c8c5c"/><circle cx="8" cy="11.500" r="3" fill="#3fa868"/><path d="M3 3.500h10" stroke="#dde"/>'],
 ['<path d="M1 12l4-9 7 2-1 7z" fill="#4a5c9c" stroke="#223"/><path d="M3 10h7M4 7h7M7 4v8" stroke="#fff" stroke-width=".7"/><path d="M8 11 15 1" stroke="#222" stroke-width="1.500"/><path d="M.5 12.500h14v3H.5z" fill="#e8d070" stroke="#776"/>'],'M','G',
 [gold,man(B,6,1),man(R,3,6)],[gold,net,man(B)],[gold,net,man(R)],[['gold',1,1,8,11],coins(8,6)],
 [gold,'<path d="M4 15h12M5.500 14V9M8.500 14V6M11.500 14V4M14 14V7" stroke="#888" stroke-width="1.600"/>'],[gold,flat(6,10,'#888')],[['gold',1,0,8,10],coins(4,7),['flat',8,11,8,4,'#d8b020']],'S',
 [paper,net,man(B)],[flat(0,0,P),arr,cube(10,10)],[paper,net,man(K)],[cube(0,0),arr,flat(6,11,P)],[cube(0,0),arr,flat(6,11,L)],
 [coins(0,6),coins(8,7),['bend',3,0,10,6]],[paper,'<path d="M4 15V9l6-4 6 4v6z" fill="#6cb545" stroke="#3a7a22"/>',['coins',7,9,6,6]],[flat(0,0,P),arr,flat(6,11,O)],
 [paper,['bend',5,3,10,6],coins(8,7)],[['paper',3,0,13,15],coins(0,0),'<path d="M3 9c1 5 6 5 8 2" fill="none" stroke="#24457a" stroke-width="1.500"/>'],
 [coins(8,7),coins(7,5),'<path d="M5 0v10M0 5h10" stroke="#28b428" stroke-width="3"/>'],[coins(8,7),coins(7,5),'<path d="M0 4h10" stroke="#28b428" stroke-width="3"/>'],
 [paper,coins(1,7),['tick',6,3,10,8]],[paper,coins(3,6),coins(8,7)],[paper,'<path d="M7 15 15 6" stroke="#25a045" stroke-width="2"/><circle cx="8" cy="9" r="1.700" fill="#25a045"/><circle cx="14" cy="13" r="1.700" fill="#25a045"/>'],
 [paper,man(K,6,3),man(B,4,6)],['<rect x="2" y=".5" width="12" height="15" rx="2" fill="#28a060" stroke="#14603a"/><path d="M6 4v8h5M6 8h5" stroke="#a9f0c4" fill="none" stroke-width="1.500"/>'],'M','G',
 [sig,cube(9,10),man(B,6,0)],[sig,cube(9,10,N),man(K,6,0)],[sig,man(B,7,2),man(K,3,6)],[sig,'<path d="M9.500 3v9" stroke="#444"/>',cube(10,2),flat(6,11,P)],[sig,'<path d="M9.500 3v9" stroke="#444"/>',cube(10,0),flat(6,11,O)],[sig,cube(10,4),flat(6,11,L)],
 [sig,'<path d="M8 4.500h6V15H8z" fill="#ddd" stroke="#666"/><path d="M8 7.500h6M8 10.500h6M8 13.500h6" stroke="#666"/>'],[sig,['tick',6,6,10,8]],'M'];
const layer=l=>typeof l==='string'?l:`<use href="#${l[0]}" x="${l[1]}" y="${l[2]}" width="${l[3]}" height="${l[4]}" color="${l[5]||'#000'}"/>`;
const icon=ls=>`<svg width="16" height="16" viewBox="0 0 16 16">${ls.map(layer).join('')}</svg>`;
function draw(id,items){
  document.getElementById(id).innerHTML=items.map((t,i)=>
    t==='G'?`<span class="grip${i?'':' lead-in'}"></span>`:
    t==='S'?'<span class="vsep"></span>':
    t==='M'?'<button class="more" aria-label="Ещё"><svg width="6" height="3"><use href="#dn"/></svg></button>':
    t==='F'?'<div class="finder d-flex"><input aria-label="Поиск"><button aria-label="Список"><svg width="8" height="4" color="#999"><use href="#dn"/></svg></button><button aria-label="Сброс"><svg width="8" height="8" color="#999"><use href="#xx"/></svg></button></div>':
    t[0]==='T'?`<button class="tool">${t[1]}</button>`:
    id==='bar1'?`<button class="tool" aria-label="${t[1]}">${icon([t[0]])}</button>`:
    `<button class="tool" aria-label="Команда ${i}">${icon(t)}</button>`).join('');
}
draw('bar1',bar1); draw('bar2',bar2);
</script>
<script src="https://cdn.jsdelivr.net/npm/bootstrap@5.3.0/dist/js/bootstrap.bundle.min.js"></script>
</body>
</html>
